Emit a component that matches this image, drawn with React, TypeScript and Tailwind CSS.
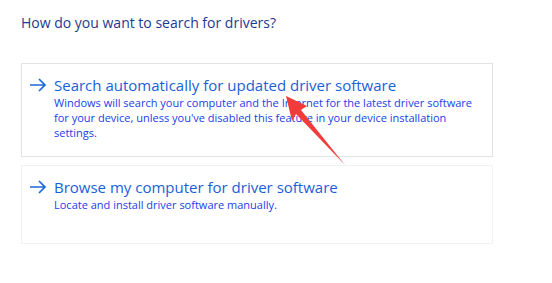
const font = { fontFamily: '"Open Sans", "Noto Sans", sans-serif' };

function Arrow() {
  return (
    <svg width="18" height="20" viewBox="0 0 18 20" className="shrink-0">
      <path d="M1 10h15M10 4l6 6-6 6" fill="none" stroke="#1b6ad8" strokeWidth="1.7" />
    </svg>
  );
}

function Option({ title, desc, box }: { title: string; desc: string; box: string }) {
  return (
    <div className={`w-[472px] border ${box} bg-white pt-[11px] pl-[7px] pr-[6px] flex gap-[7px]`}>
      <Arrow />
      <div className="flex flex-col">
        <div className="text-[15px] leading-[20px] text-[#1a5fd6]">{title}</div>
        <div className="text-[11px] leading-[15px] text-[#2040e8]">{desc}</div>
      </div>
    </div>
  );
}

export default function App() {
  return (
    <div className="relative w-[552px] h-[283px] bg-white overflow-hidden" style={font}>
      <div className="pl-[21px] pt-[13px] flex flex-col">
        <h1 className="text-[14px] leading-[20px] text-[#1d3a8f]">How do you want to search for drivers?</h1>
        <div className="mt-[30px] flex flex-col gap-[8px]">
          <Option
            box="border-[#e2e2e2] h-[94px]"
            title="Search automatically for updated driver software"
            desc="Windows will search your computer and the Internet for the latest driver software for your device, unless you've disabled this feature in your device installation settings."
          />
          <Option
            box="border-[#f2f2f2] h-[79px]"
            title="Browse my computer for driver software"
            desc="Locate and install driver software manually."
          />
        </div>
      </div>
      {/* red pointer arrow */}
      <svg className="absolute left-0 top-0 pointer-events-none" width="552" height="283" viewBox="0 0 552 283">
        <polygon points="286,96 307,106 301,110 345,165 296,114 292,121" fill="#f23c3c" />
      </svg>
    </div>
  );
}
